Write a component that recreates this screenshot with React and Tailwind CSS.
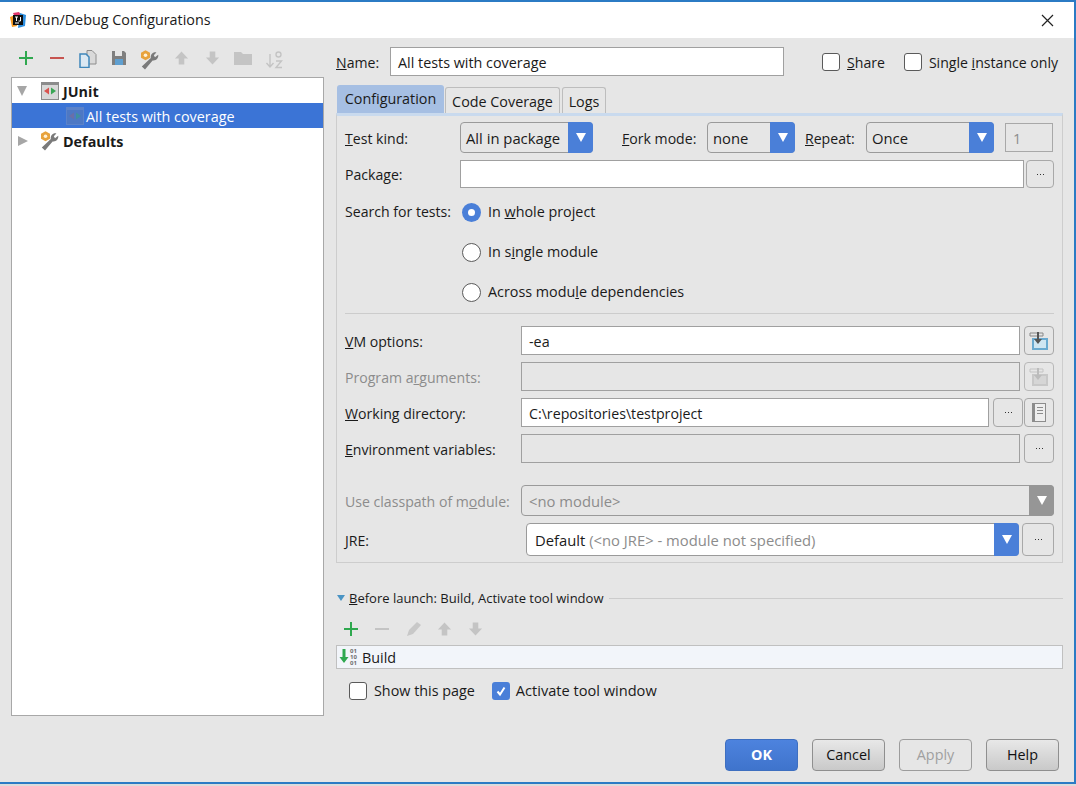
const FONT = "font-['Open_Sans','Noto_Sans',sans-serif]"

function Arrow({ up, color = '#c4c4c4' }) {
  return (
    <svg width="15" height="16" viewBox="0 0 16 16" className={up ? '' : 'rotate-180'}>
      <path d="M8 1 L15 8.5 H11 V15 H5 V8.5 H1 Z" fill={color} />
    </svg>
  )
}

function PlusIcon() {
  return (
    <svg width="16" height="16" viewBox="0 0 16 16">
      <path d="M8 1 V15 M1 8 H15" stroke="#2fa84f" strokeWidth="2" />
    </svg>
  )
}

function MinusIcon({ color = '#c75450' }) {
  return (
    <svg width="16" height="16" viewBox="0 0 16 16">
      <path d="M1 8 H15" stroke={color} strokeWidth="2" />
    </svg>
  )
}

function WrenchIcon() {
  return (
    <svg width="20" height="20" viewBox="0 0 20 20">
      <path d="M5 19.5 L1.8 16.5 L10.8 8 C10.2 4.6 13 1.6 16.4 2.4 L13.8 5.2 L15 7.2 L18.2 4.8 C19 8 15.8 11.2 12.6 10.4 Z" fill="#7a7a7a" />
      <path d="M5.5 0.3 L10 2.8 V7.8 L5.5 10.3 L1 7.8 V2.8 Z" fill="#e8a33d" />
      <circle cx="5.5" cy="5.3" r="1.8" fill="#fff2d8" />
    </svg>
  )
}

function JUnitIcon({ dim }) {
  return (
    <svg width="18" height="18" viewBox="0 0 18 18">
      <rect x="0.5" y="0.5" width="17" height="17" fill={dim ? '#4d78c4' : '#d8d8d8'} stroke={dim ? '#5b82c9' : '#8c8c8c'} />
      <path d="M1 1 H17 V3 H1 Z" fill={dim ? '#5b82c9' : '#8c8c8c'} />
      <path d="M3 9 L8 5.5 V12.5 Z" fill={dim ? '#6a6fa8' : '#d9534f'} />
      <path d="M15 9 L10 5.5 V12.5 Z" fill={dim ? '#3f8f9f' : '#3aa655'} />
    </svg>
  )
}

function Checkbox({ checked }) {
  return checked ? (
    <span className="w-[18px] h-[18px] rounded-[3px] bg-[#4a7fd8] flex items-center justify-center">
      <svg width="12" height="12" viewBox="0 0 12 12">
        <path d="M2.5 6.5 L5 9.5 L9.5 2.5" fill="none" stroke="white" strokeWidth="2" />
      </svg>
    </span>
  ) : (
    <span className="w-[18px] h-[18px] rounded-[3px] bg-white border border-[#5a5a5a]" />
  )
}

function Radio({ checked }) {
  return checked ? (
    <span className="w-[19px] h-[19px] rounded-full bg-[#4a7fd8] flex items-center justify-center">
      <span className="w-[7px] h-[7px] rounded-full bg-white" />
    </span>
  ) : (
    <span className="w-[19px] h-[19px] rounded-full bg-white border border-[#5a5a5a]" />
  )
}

function Caret({ bg = 'bg-[#4a7fd8]' }) {
  return (
    <span className={`w-[25px] ${bg} self-stretch rounded-r-[4px] flex items-center justify-center -my-px -mr-px`}>
      <svg width="10" height="9" viewBox="0 0 10 9">
        <path d="M0 0 H10 L5 9 Z" fill="white" />
      </svg>
    </span>
  )
}

function Select({ className, children }) {
  return (
    <div className={`flex items-center rounded-[4px] border border-[#9a9a9a] ${className}`}>
      <span className="flex-1 pl-[5px] text-[14.8px] whitespace-nowrap overflow-hidden">{children}</span>
      <Caret />
    </div>
  )
}

function Dots({ className = 'w-[30px]' }) {
  return (
    <div className={`${className} self-stretch rounded-[4px] border border-[#a8a8a8] flex items-center justify-center`}>
      <span className="flex gap-[2px]">
        <i className="w-px h-px bg-[#333]" />
        <i className="w-px h-px bg-[#333]" />
        <i className="w-px h-px bg-[#333]" />
      </span>
    </div>
  )
}

function InsertIcon({ dim }) {
  const a = dim ? '#c8c8c8' : '#6aaad0'
  const b = dim ? '#d6d6d6' : '#cfe6f2'
  const c = dim ? '#bcbcbc' : '#555'
  return (
    <svg width="20" height="20" viewBox="0 0 20 20">
      <path d="M1 2 H14 V5 H1 Z" fill="none" stroke={dim ? '#c4c4c4' : '#888'} />
      <rect x="4" y="8" width="14" height="10" fill={b} stroke={a} strokeWidth="2" />
      <path d="M8 1 H10 V8 H13 L9 13 L5 8 H8 Z" fill={c} />
    </svg>
  )
}

function Row({ className, children }) {
  return <div className={`flex items-stretch ${className}`}>{children}</div>
}

function Label({ className, children }) {
  return <span className={`flex items-center pt-[2px] text-[14.1px] whitespace-nowrap ${className}`}>{children}</span>
}

function RadioLabel({ children }) {
  return <span className="ml-[7px] flex items-center whitespace-nowrap">{children}</span>
}

function FooterButton({ children, kind }) {
  const look = {
    ok: 'bg-gradient-to-b from-[#4d83de] to-[#3f74cc] border-[#3e6fc0] text-white font-bold',
    normal: 'bg-gradient-to-b from-[#e8e8e8] to-[#c9c9c9] border-[#8f8f8f] text-[#111]',
    off: 'border-[#9c9c9c] text-[#a0a0a0]',
  }[kind]
  return <div className={`w-[73px] h-[32px] rounded-[4px] border flex items-center justify-center ${look}`}>{children}</div>
}

export default function App() {
  return (
    <div className={`${FONT} w-[1076px] h-[786px] overflow-hidden bg-[#dcdcdc] text-[14.35px] text-[#1a1a1a] leading-[20px]`}>
      <div className="h-[784px] border-t-2 border-r-2 border-b-2 border-[#2b7bc4] bg-[#e6e6e6] flex flex-col">
        {/* Title bar */}
        <div className="h-[36px] bg-white flex items-center pl-[10px] pr-[20px] shrink-0">
          <svg width="16" height="16" viewBox="0 0 16 16">
            <path d="M3 1 L9 0 L13 6 L6 8 Z" fill="#e0356b" />
            <path d="M0 5 L5 3 L7 14 L2 15 Z" fill="#f59a23" />
            <path d="M10 1 L16 3 L15 14 L8 16 Z" fill="#2d8fe0" />
            <rect x="3" y="3" width="10" height="10" fill="#0f0f0f" />
            <path d="M5 5 H8 M6.5 5 V9 M10.5 5 V9 H8.5 M5 11 H9" stroke="white" strokeWidth="1" />
          </svg>
          <span className="ml-[7px]">Run/Debug Configurations</span>
          <svg width="13" height="13" viewBox="0 0 13 13" className="ml-auto">
            <path d="M1 1 L12 12 M12 1 L1 12" stroke="#222" strokeWidth="1.2" />
          </svg>
        </div>

        <div className="flex flex-1 pl-[11px] min-h-0">
          {/* Left column */}
          <div className="w-[313px] shrink-0 flex flex-col pt-[12px]">
            <div className="h-[27px] flex items-start pl-[7px]">
              <PlusIcon />
              <span className="ml-[15px]"><MinusIcon /></span>
              <svg width="18" height="18" viewBox="0 0 18 18" className="ml-[14px]">
                <path d="M8 0.5 H13 L17 4.5 V14 H8 Z" fill="#d9d9d9" stroke="#8c8c8c" />
                <path d="M1 4 H7 L10 7 V17.5 H1 Z" fill="#dbe8f2" stroke="#3f87ba" strokeWidth="1.5" />
              </svg>
              <svg width="16" height="16" viewBox="0 0 16 16" className="ml-[14px]">
                <path d="M1 1 H13 L15 3 V15 H1 Z" fill="#7f7f7f" />
                <rect x="4" y="1" width="7" height="5" fill="#e6e6e6" />
                <rect x="4" y="9" width="8" height="6" fill="#5f9fd0" />
              </svg>
              <span className="ml-[13px]"><WrenchIcon /></span>
              <span className="ml-[14px]"><Arrow up /></span>
              <span className="ml-[16px]"><Arrow /></span>
              <svg width="18" height="16" viewBox="0 0 18 16" className="ml-[14px]">
                <path d="M0 2 H7 L9 4 H18 V15 H0 Z" fill="#c4c4c4" />
              </svg>
              <svg width="18" height="20" viewBox="0 0 18 20" className="ml-[13px]">
                <path d="M5 4 V17 M1.5 13 L5 17 L8.5 13" fill="none" stroke="#c4c4c4" strokeWidth="1.4" />
                <path d="M11 11 H16.5 L11 17.5 H17" fill="none" stroke="#c4c4c4" strokeWidth="1.4" />
                <circle cx="13.5" cy="4.5" r="2.5" fill="none" stroke="#c4c4c4" strokeWidth="1.4" />
              </svg>
            </div>
            <div className="h-[639px] border border-[#a8a8a8] bg-white">
              <div className="h-[25px] flex items-center pl-[5px]">
                <span className="w-0 h-0 border-l-[5px] border-r-[5px] border-t-[10px] border-l-transparent border-r-transparent border-t-[#a6a6a6]" />
                <span className="ml-[14px]"><JUnitIcon /></span>
                <b className="ml-[4px] pt-[2px] font-bold">JUnit</b>
              </div>
              <div className="h-[25px] bg-[#3b74d6] text-white flex items-center pl-[54px]">
                <JUnitIcon dim />
                <span className="ml-[2px] pt-[2px]">All tests with coverage</span>
              </div>
              <div className="h-[25px] flex items-center pl-[6px]">
                <span className="w-0 h-0 border-t-[5px] border-b-[5px] border-l-[10px] border-t-transparent border-b-transparent border-l-[#a6a6a6]" />
                <span className="ml-[12px]"><WrenchIcon /></span>
                <b className="ml-[3px] pt-[2px] font-bold">Defaults</b>
              </div>
            </div>
          </div>

          {/* Right column */}
          <div className="flex-1 min-w-0 flex flex-col pl-[12px] pr-[11px] pt-[9px]">
            <Row className="h-[29px] shrink-0">
              <Label className="w-[54px]"><span><u>N</u>ame:</span></Label>
              <div className="w-[394px] border border-[#a0a0a0] bg-white flex items-center pl-[7px] pt-[2px]">All tests with coverage</div>
              <span className="ml-[38px] flex items-center"><Checkbox /></span>
              <Label className="ml-[7px]"><span><u>S</u>hare</span></Label>
              <span className="ml-[19px] flex items-center"><Checkbox /></span>
              <Label className="ml-[7px]"><span>Single <u>i</u>nstance only</span></Label>
            </Row>

            {/* Tabs */}
            <div className="flex items-end h-[28px] mt-[9px] pl-px shrink-0">
              <div className="w-[107px] h-[28px] bg-[#a6bfe3] rounded-t-[3px] flex items-center justify-center">Configuration</div>
              <div className="w-[115px] h-[26px] ml-px border border-b-0 border-[#bdbdbd] rounded-t-[3px] flex items-center justify-center pt-[2px] whitespace-nowrap">Code Coverage</div>
              <div className="w-[44px] h-[26px] ml-[2px] border border-b-0 border-[#bdbdbd] rounded-t-[3px] flex items-center justify-center pt-[2px]">Logs</div>
            </div>

            {/* Settings panel */}
            <div className="h-[450px] shrink-0 border-t-[3px] border-t-[#c9daee] border-x border-b border-x-[#cdcdcd] border-b-[#cdcdcd] pl-[8px] pr-[8px] pt-[6px] flex flex-col">
              <Row className="h-[31px] shrink-0">
                <Label className="w-[115px]"><span><u>T</u>est kind:</span></Label>
                <Select className="w-[133px]">All in package</Select>
                <Label className="ml-[29px] w-[85px]"><span><u>F</u>ork mode:</span></Label>
                <Select className="w-[88px]">none</Select>
                <Label className="ml-[10px] w-[61px]"><span><u>R</u>epeat:</span></Label>
                <Select className="w-[128px]">Once</Select>
                <div className="ml-[11px] w-[48px] my-px border border-[#a8a8a8] flex items-center pl-[7px] pt-[2px] text-[#8c8c8c]">1</div>
              </Row>
              <Row className="h-[28px] mt-[7px] shrink-0">
                <Label className="w-[115px]"><span>Packa<u>g</u>e:</span></Label>
                <div className="w-[564px] border border-[#a0a0a0] bg-white" />
                <Dots className="ml-[2px] w-[28px]" />
              </Row>

              <Row className="h-[20px] mt-[14px] shrink-0">
                <span className="w-[117px] flex items-center text-[14.1px] whitespace-nowrap">Search for tests:</span>
                <span className="flex items-center"><Radio checked /></span>
                <RadioLabel><span>In <u>w</u>hole project</span></RadioLabel>
              </Row>
              <Row className="h-[20px] mt-[20px] pl-[117px] shrink-0">
                <span className="flex items-center"><Radio /></span>
                <RadioLabel><span>In s<u>i</u>ngle module</span></RadioLabel>
              </Row>
              <Row className="h-[20px] mt-[20px] pl-[117px] shrink-0">
                <span className="flex items-center"><Radio /></span>
                <RadioLabel><span>Across modu<u>l</u>e dependencies</span></RadioLabel>
              </Row>

              <div className="h-px bg-[#cccccc] mt-[11px] shrink-0" />

              <Row className="h-[29px] mt-[12px] shrink-0">
                <Label className="w-[176px]"><span><u>V</u>M options:</span></Label>
                <div className="w-[499px] border border-[#a0a0a0] bg-white flex items-center pl-[7px] pt-[2px]">-ea</div>
                <div className="ml-[4px] w-[30px] rounded-[4px] border border-[#a8a8a8] flex items-center justify-center"><InsertIcon /></div>
              </Row>
              <Row className="h-[29px] mt-[7px] shrink-0">
                <Label className="w-[176px] text-[#8c8c8c]"><span>Program a<u>r</u>guments:</span></Label>
                <div className="w-[499px] border border-[#a0a0a0]" />
                <div className="ml-[4px] w-[30px] rounded-[4px] border border-[#b8b8b8] flex items-center justify-center"><InsertIcon dim /></div>
              </Row>
              <Row className="h-[29px] mt-[7px] shrink-0">
                <Label className="w-[176px]"><span><u>W</u>orking directory:</span></Label>
                <div className="w-[468px] border border-[#a0a0a0] bg-white flex items-center pl-[7px] pt-[2px] text-[14.2px]">C:\repositories\testproject</div>
                <Dots className="ml-[4px] w-[30px]" />
                <div className="ml-px w-[30px] rounded-[4px] border border-[#a8a8a8] flex items-center justify-center">
                  <svg width="14" height="19" viewBox="0 0 14 19">
                    <rect x="0" y="0" width="14" height="19" fill="#8c8c8c" />
                    <rect x="3" y="1" width="10" height="17" fill="#eeeeee" />
                    <path d="M5 4.5 H11 M5 7.5 H11 M5 10.5 H11" stroke="#8c8c8c" />
                  </svg>
                </div>
              </Row>
              <Row className="h-[29px] mt-[7px] shrink-0">
                <Label className="w-[176px]"><span><u>E</u>nvironment variables:</span></Label>
                <div className="w-[499px] border border-[#a0a0a0]" />
                <Dots className="ml-[4px] w-[30px]" />
              </Row>

              <Row className="h-[31px] mt-[22px] shrink-0">
                <Label className="w-[176px] text-[#8c8c8c]"><span>Use classpath of m<u>o</u>dule:</span></Label>
                <div className="w-[533px] flex items-center rounded-[4px] border border-[#9a9a9a] pl-[7px] text-[#8c8c8c]">
                  <span className="flex-1 text-[14.8px]">&lt;no module&gt;</span>
                  <Caret bg="bg-[#969696]" />
                </div>
              </Row>
              <Row className="h-[33px] mt-[7px] shrink-0">
                <Label className="w-[181px]"><span><u>J</u>RE:</span></Label>
                <div className="w-[493px] flex items-center rounded-[4px] border border-[#9a9a9a] bg-white pl-[8px]">
                  <span className="flex-1 text-[14.8px]">Default <span className="text-[#8c8c8c]">(&lt;no JRE&gt; - module not specified)</span></span>
                  <Caret />
                </div>
                <Dots className="ml-[3px] w-[32px]" />
              </Row>
            </div>

            {/* Before launch */}
            <div className="flex items-center h-[20px] mt-[25px] shrink-0">
              <span className="w-0 h-0 ml-[1px] border-l-[4px] border-r-[4px] border-t-[6px] border-l-transparent border-r-transparent border-t-[#4a94c4]" />
              <span className="ml-[4px] text-[13px] whitespace-nowrap"><u>B</u>efore launch: Build, Activate tool window</span>
              <span className="ml-[6px] flex-1 h-px bg-[#cccccc]" />
            </div>
            <div className="h-[16px] mt-[13px] pl-[7px] flex shrink-0">
              <PlusIcon />
              <span className="ml-[15px]"><MinusIcon color="#c4c4c4" /></span>
              <svg width="16" height="16" viewBox="0 0 16 16" className="ml-[16px]">
                <path d="M1 15 L3 9 L11 1 L15 4 L7 13 Z" fill="#c8c8c8" />
              </svg>
              <span className="ml-[15px]"><Arrow up /></span>
              <span className="ml-[16px]"><Arrow /></span>
            </div>
            <div className="h-[24px] mt-[8px] shrink-0 border border-[#c0c0c0] bg-[#f2f5fa] flex items-center pl-[2px]">
              <svg width="22" height="20" viewBox="0 0 22 20" className="shrink-0">
                <path d="M3.5 2 H6.5 V10 H9.5 L5 16 L0.5 10 H3.5 Z" fill="#2fa84f" />
                <text x="11" y="6" fontSize="6" fontWeight="bold" fill="#6e6e6e">01</text>
                <text x="11" y="12" fontSize="6" fontWeight="bold" fill="#6e6e6e">10</text>
                <text x="11" y="18" fontSize="6" fontWeight="bold" fill="#6e6e6e">01</text>
              </svg>
              <span className="ml-px pt-[2px]">Build</span>
            </div>
            <div className="h-[20px] mt-[12px] pl-[13px] flex items-center shrink-0">
              <Checkbox />
              <span className="ml-[7px]">Show this page</span>
              <span className="ml-[17px]"><Checkbox checked /></span>
              <span className="ml-[6px] pb-[2px] text-[14.6px]">Activate tool window</span>
            </div>

            {/* Footer */}
            <div className="flex justify-end gap-[14px] mt-[38px] pr-[4px] shrink-0">
              <FooterButton kind="ok">OK</FooterButton>
              <FooterButton kind="normal">Cancel</FooterButton>
              <FooterButton kind="off">Apply</FooterButton>
              <FooterButton kind="normal">Help</FooterButton>
            </div>
          </div>
        </div>
      </div>
    </div>
  )
}
